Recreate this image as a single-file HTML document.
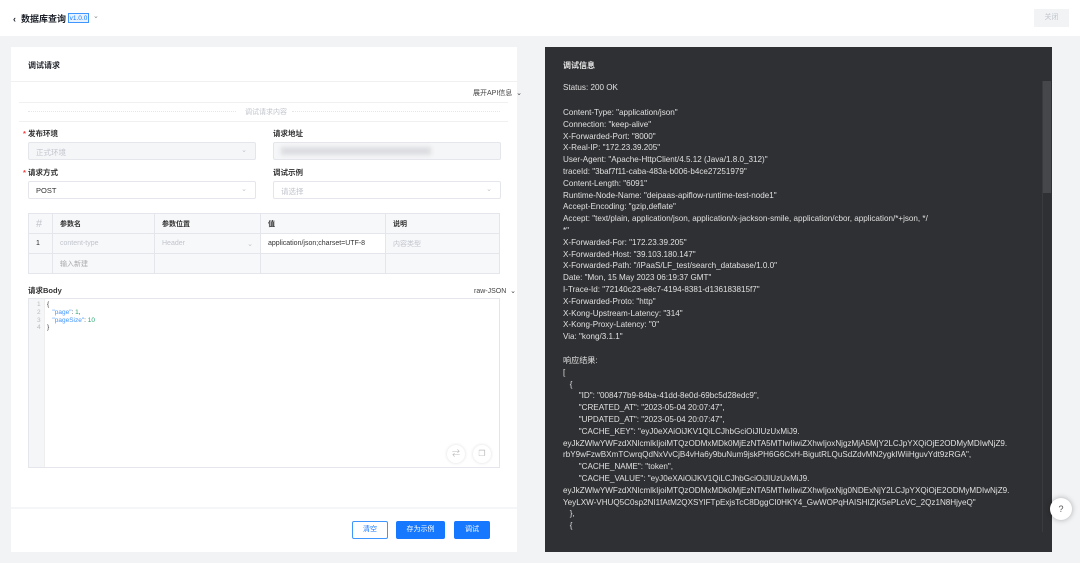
<!DOCTYPE html>
<html><head><meta charset="utf-8"><style>
*{box-sizing:border-box;margin:0;padding:0}
body{width:1080px;height:563px;background:#f2f3f5;font-family:"Liberation Sans","Noto Sans CJK SC",sans-serif;position:relative;overflow:hidden;color:#1d2129}
.a{position:absolute}
.t{font-size:8px;white-space:nowrap}
.inp{position:absolute;height:18px;border:1px solid #e5e6eb;border-radius:2px;font-size:7.5px;padding:4px 7px;color:#c0c4cc}
.inp .ch{position:absolute;right:8px;top:3px;font-size:7px;color:#c0c4cc}
.dis{background:#f5f6f8}
.lb{font-size:7.5px;font-weight:bold;color:#333}
.req:before{content:"* ";color:#f53f3f}
.r{position:absolute;left:563px;font-size:8.1px;color:#e0e0e0;white-space:nowrap}
table{border-collapse:collapse;font-size:7px}
td{border:1px solid #e5e6eb;height:20px;padding:0 7px}
</style></head><body>
<div class="a" style="left:0;top:0;width:1080px;height:36px;background:#fff"></div>
<div class="a t" style="left:13px;top:12px;font-size:9px;font-weight:bold">‹&nbsp; 数据库查询</div>
<div class="a" style="left:68px;top:13px;width:21px;height:10px;border:1px solid #4096ff;background:#e8f3ff;font-size:6.5px;color:#1677ff;text-align:center;line-height:9px">v1.0.0</div>
<div class="a t" style="left:93px;top:12px;font-size:7px;color:#888">⌄</div>
<div class="a" style="left:1034px;top:9px;width:35px;height:18px;background:#f2f3f5;font-size:7px;color:#c0c4cc;text-align:center;line-height:18px">关闭</div>

<div class="a" style="left:11px;top:47px;width:506px;height:505px;background:#fff"></div>
<div class="a t" style="left:28px;top:60px;font-size:8px;font-weight:bold">调试请求</div>
<div class="a" style="left:11px;top:81px;width:506px;height:1px;background:#f0f0f0"></div>
<div class="a t" style="left:473px;top:88px;font-size:7px;color:#444">展开API信息 &nbsp;⌄</div>
<div class="a" style="left:19px;top:102px;width:489px;height:1px;background:#f0f0f0"></div>
<div class="a" style="left:28px;top:111px;width:208px;border-top:1px dotted #e5e6eb"></div>
<div class="a" style="left:292px;top:111px;width:208px;border-top:1px dotted #e5e6eb"></div>
<div class="a t" style="left:245px;top:107px;font-size:7px;color:#c0c4cc">调试请求内容</div>
<div class="a" style="left:19px;top:121px;width:489px;height:1px;background:#f0f0f0"></div>
<div class="a lb req" style="left:23px;top:128px">发布环境</div>
<div class="a lb" style="left:273px;top:128px">请求地址</div>
<div class="inp dis" style="left:28px;top:142px;width:228px">正式环境<span class="ch">⌄</span></div>
<div class="inp dis" style="left:273px;top:142px;width:228px"><span style="display:inline-block;width:150px;height:8px;background:#dcdde0;filter:blur(2px)"></span></div>
<div class="a lb req" style="left:23px;top:167px">请求方式</div>
<div class="a lb" style="left:273px;top:167px">调试示例</div>
<div class="inp" style="left:28px;top:181px;width:228px;color:#333">POST<span class="ch">⌄</span></div>
<div class="inp" style="left:273px;top:181px;width:228px">请选择<span class="ch">⌄</span></div>
<table class="a" style="left:28px;top:213px;width:472px">
<tr style="background:#f7f8fa;font-weight:bold;color:#333"><td style="width:24px;color:#c0c4cc;font-size:11px;font-weight:normal">#</td><td style="width:102px">参数名</td><td style="width:106px">参数位置</td><td style="width:125px">值</td><td>说明</td></tr>
<tr><td style="background:#f7f8fa">1</td><td style="background:#f7f8fa;color:#c0c4cc">content-type</td><td style="background:#f7f8fa;color:#c0c4cc">Header<span style="float:right">⌄</span></td><td style="color:#333">application/json;charset=UTF-8</td><td style="background:#f7f8fa;color:#c0c4cc">内容类型</td></tr>
<tr style="background:#f7f8fa"><td></td><td style="color:#aaa">输入新建</td><td></td><td></td><td></td></tr>
</table>
<div class="a lb" style="left:28px;top:285px">请求Body</div>
<div class="a t" style="left:474px;top:287px;font-size:7px;color:#444">raw-JSON &nbsp;⌄</div>
<div class="a" style="left:28px;top:298px;width:472px;height:170px;border:1px solid #e5e6eb"></div>
<div class="a" style="left:29px;top:299px;width:16px;height:168px;background:#f5f6f8;border-right:1px solid #eee"></div>
<div class="a" style="left:37px;top:301px;font-size:6.5px;color:#bbb;line-height:7.8px">1<br>2<br>3<br>4</div>
<div class="a" style="left:47px;top:301px;font-size:6.5px;line-height:7.8px;color:#333">{<br>&nbsp;&nbsp;&nbsp;<span style="color:#4096ff">"page"</span>: <span style="color:#2ba471">1</span>,<br>&nbsp;&nbsp;&nbsp;<span style="color:#4096ff">"pageSize"</span>: <span style="color:#2ba471">10</span><br>}</div>
<div class="a" style="left:447px;top:445px;width:18px;height:18px;border-radius:50%;background:#fff;box-shadow:0 0 3px #ddd;font-size:8px;color:#bbb;text-align:center;line-height:18px">⇄</div>
<div class="a" style="left:473px;top:445px;width:18px;height:18px;border-radius:50%;background:#fff;box-shadow:0 0 3px #ddd;font-size:8px;color:#bbb;text-align:center;line-height:18px">❐</div>
<div class="a" style="left:11px;top:507px;width:506px;height:2px;background:#f5f6f8"></div>
<div class="a" style="left:352px;top:521px;width:36px;height:18px;border:1px solid #4096ff;border-radius:2px;font-size:7px;color:#1677ff;text-align:center;line-height:16px">清空</div>
<div class="a" style="left:396px;top:521px;width:49px;height:18px;background:#1677ff;border-radius:2px;font-size:7px;color:#fff;text-align:center;line-height:18px">存为示例</div>
<div class="a" style="left:454px;top:521px;width:36px;height:18px;background:#1677ff;border-radius:2px;font-size:7px;color:#fff;text-align:center;line-height:18px">调试</div>

<div class="a" style="left:545px;top:47px;width:507px;height:505px;background:#2f3033"></div>
<div class="a t" style="left:563px;top:60px;font-size:8px;font-weight:bold;color:#e8e8e8">调试信息</div>
<div class="a" style="left:1043px;top:81px;width:8px;height:112px;background:#46474a"></div>
<div class="a" style="left:1042px;top:81px;width:1px;height:451px;background:#3a3b3e"></div>
<div class="r" style="top:83px">Status: 200 OK</div>
<div class="r" style="top:107px;line-height:11.8px">Content-Type: "application/json"<br>Connection: "keep-alive"<br>X-Forwarded-Port: "8000"<br>X-Real-IP: "172.23.39.205"<br>User-Agent: "Apache-HttpClient/4.5.12 (Java/1.8.0_312)"<br>traceId: "3baf7f11-caba-483a-b006-b4ce27251979"<br>Content-Length: "6091"<br>Runtime-Node-Name: "deipaas-apiflow-runtime-test-node1"<br>Accept-Encoding: "gzip,deflate"<br>Accept: "text/plain, application/json, application/x-jackson-smile, application/cbor, application/*+json, */<br>*"<br>X-Forwarded-For: "172.23.39.205"<br>X-Forwarded-Host: "39.103.180.147"<br>X-Forwarded-Path: "/iPaaS/LF_test/search_database/1.0.0"<br>Date: "Mon, 15 May 2023 06:19:37 GMT"<br>I-Trace-Id: "72140c23-e8c7-4194-8381-d136183815f7"<br>X-Forwarded-Proto: "http"<br>X-Kong-Upstream-Latency: "314"<br>X-Kong-Proxy-Latency: "0"<br>Via: "kong/3.1.1"</div>
<div class="r" style="top:355px;line-height:11.8px">响应结果:<br>[<br>&nbsp;&nbsp;&nbsp;{<br>&nbsp;&nbsp;&nbsp;&nbsp;&nbsp;&nbsp;&nbsp;"ID": "008477b9-84ba-41dd-8e0d-69bc5d28edc9",<br>&nbsp;&nbsp;&nbsp;&nbsp;&nbsp;&nbsp;&nbsp;"CREATED_AT": "2023-05-04 20:07:47",<br>&nbsp;&nbsp;&nbsp;&nbsp;&nbsp;&nbsp;&nbsp;"UPDATED_AT": "2023-05-04 20:07:47",<br>&nbsp;&nbsp;&nbsp;&nbsp;&nbsp;&nbsp;&nbsp;"CACHE_KEY": "eyJ0eXAiOiJKV1QiLCJhbGciOiJIUzUxMiJ9.<br>eyJkZWlwYWFzdXNlcmlkIjoiMTQzODMxMDk0MjEzNTA5MTIwIiwiZXhwIjoxNjgzMjA5MjY2LCJpYXQiOjE2ODMyMDIwNjZ9.<br>rbY9wFzwBXmTCwrqQdNxVvCjB4vHa6y9buNum9jskPH6G6CxH-BigutRLQuSdZdvMN2ygkIWiiHguvYdt9zRGA",<br>&nbsp;&nbsp;&nbsp;&nbsp;&nbsp;&nbsp;&nbsp;"CACHE_NAME": "token",<br>&nbsp;&nbsp;&nbsp;&nbsp;&nbsp;&nbsp;&nbsp;"CACHE_VALUE": "eyJ0eXAiOiJKV1QiLCJhbGciOiJIUzUxMiJ9.<br>eyJkZWlwYWFzdXNlcmlkIjoiMTQzODMxMDk0MjEzNTA5MTIwIiwiZXhwIjoxNjg0NDExNjY2LCJpYXQiOjE2ODMyMDIwNjZ9.<br>YeyLXW-VHUQ5C0sp2NI1fAtM2QXSYlFTpExjsTcC8DggCI0HKY4_GwWOPqHAISHIZjK5ePLcVC_2Qz1N8HjyeQ"<br>&nbsp;&nbsp;&nbsp;},<br>&nbsp;&nbsp;&nbsp;{</div>
<div class="a" style="left:545px;top:532px;width:507px;height:20px;background:#2f3033"></div>
<div class="a" style="left:1050px;top:498px;width:22px;height:22px;border-radius:50%;background:#fff;box-shadow:0 0 6px rgba(0,0,0,.3);text-align:center;line-height:22px;font-size:9px;color:#555">?</div>
</body></html>
